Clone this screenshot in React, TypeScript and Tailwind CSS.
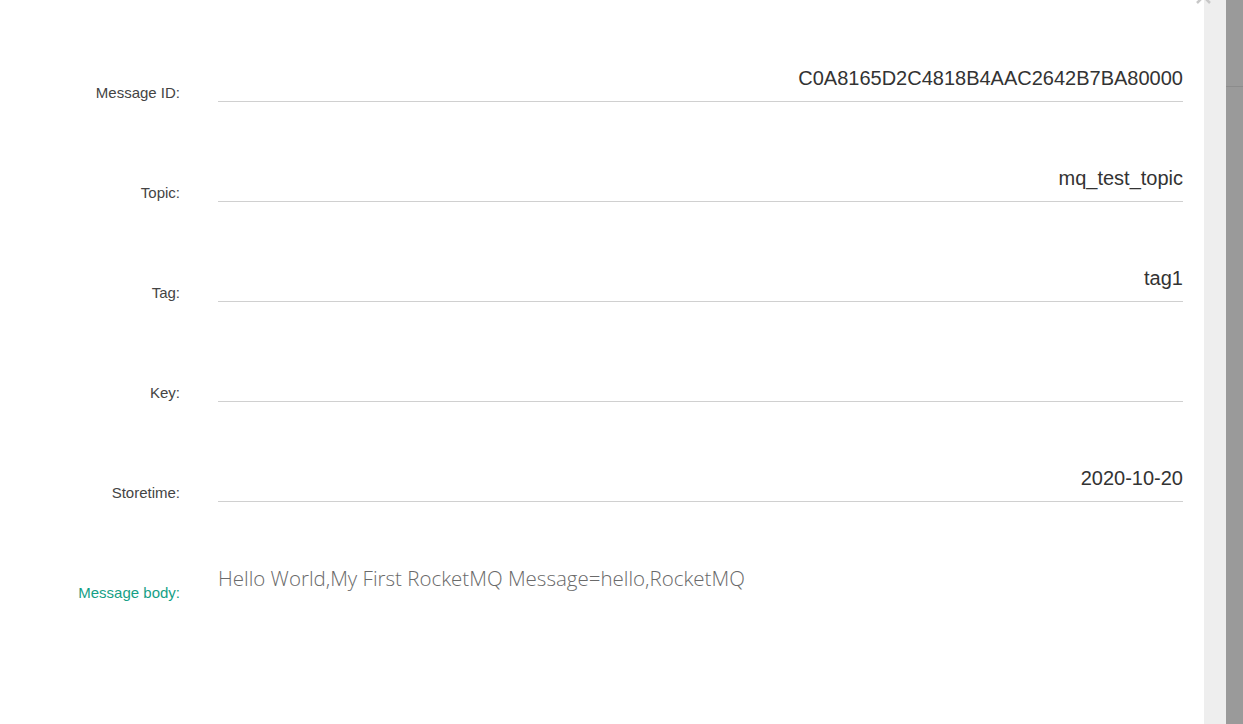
import React from "react";

const rows = [
  { label: "Message ID:", value: "C0A8165D2C4818B4AAC2642B7BA80000" },
  { label: "Topic:", value: "mq_test_topic" },
  { label: "Tag:", value: "tag1" },
  { label: "Key:", value: "" },
  { label: "Storetime:", value: "2020-10-20" },
];

export default function App() {
  return (
    <div className="flex h-[724px] w-[1243px] overflow-hidden bg-white">
      <div className="relative flex w-[1204px] flex-col bg-white pt-[2px]">
        <svg
          className="absolute left-[1196px] top-[-11px]"
          width="15"
          height="15"
          viewBox="0 0 15 15"
        >
          <path d="M1 1 L14 14 M14 1 L1 14" stroke="#c8c8c8" strokeWidth="2.5" />
        </svg>
        {rows.map((r) => (
          <div key={r.label} className="flex h-[100px] items-end">
            <div
              className="mb-[2px] w-[180px] text-right text-[15px] leading-[15px] text-[#444]"
              style={{ fontFamily: '"Liberation Sans", Arial, sans-serif' }}
            >
              {r.label}
            </div>
            <div
              className="ml-[38px] h-[35px] w-[965px] border-b border-[#d0d0d0] pb-[12px] text-right text-[20px] leading-[22px] text-[#333]"
              style={{ fontFamily: '"Liberation Sans", Arial, sans-serif' }}
            >
              {r.value}
            </div>
          </div>
        ))}
        <div className="flex h-[100px] items-end">
          <div
            className="mb-[2px] w-[180px] text-right text-[15px] leading-[15px] text-[#169f86]"
            style={{ fontFamily: '"Liberation Sans", Arial, sans-serif' }}
          >
            Message body:
          </div>
          <div
            className="mb-[12px] ml-[38px] text-[20.5px] font-light leading-[24px] text-[#6a6a6a]"
            style={{ fontFamily: '"Open Sans", sans-serif' }}
          >
            Hello World,My First RocketMQ Message=hello,RocketMQ
          </div>
        </div>
      </div>
      <div className="h-full w-[22px] bg-[#eeeeee]" />
      <div className="flex h-full w-[17px] flex-col bg-[#9a9a9a]">
        <div className="h-[86px]" />
        <div className="h-[1px] bg-[#8c8c8c]" />
      </div>
    </div>
  );
}
